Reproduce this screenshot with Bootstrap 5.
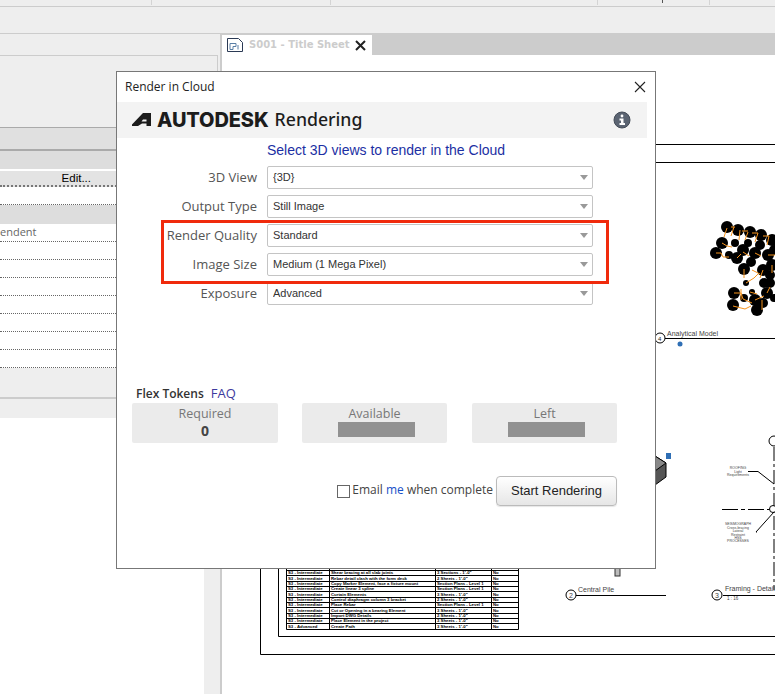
<!DOCTYPE html>
<html lang="en">
<head>
<meta charset="utf-8">
<title>Render in Cloud</title>
<link href="https://cdn.jsdelivr.net/npm/bootstrap@5.3.0/dist/css/bootstrap.min.css" rel="stylesheet">
<style>
html,body{margin:0;height:694px;overflow:hidden;background:#eee;font-family:"Open Sans",sans-serif}
.app-shell{position:relative;width:775px;height:694px;overflow:hidden}
.top-strip{height:7px;border-bottom:1px solid #ccc;background:#eee}
.top-cell{height:5px;border-right:1px solid #d4d4d4}
.tool-band{height:26px;background:#eee}
.work-area{height:661px}
.side-panel{width:222px;border-right:2px solid #ccc;border-top:1px solid #ccc;background:#eee;flex:none}
.side-inner{width:204px;background:#fff;height:100%}
.side-gap{height:94px;background:#eee;border-bottom:1px solid #aaa;padding-top:21px}
.side-box{width:218px;height:72px;border-top:1px solid #ccc;border-right:1px solid #ccc}
.side-head{height:23px;background:#e0e0e0;border-bottom:2px solid #aaa}
.side-sub{height:20px;background:#ddd;border-bottom:2px solid #fff}
.side-edit{height:16px;background:#e3e3e3;border-bottom:2px dotted #777;font:11.500px/14px "Liberation Sans",sans-serif;color:#000}
.side-edit span{width:118px;text-align:right;padding-right:27px;display:block}
.side-row{height:18px;background:#fff;border-bottom:1px dotted #666;font-size:11px;line-height:16px;color:#666}
.side-grey{height:19px;background:#ddd}
.side-band{height:31px;background:#eee;border-bottom:2px solid #ccc}
.side-foot{height:19px;background:#eee}
.view-col{min-width:0;background:#fff;position:relative}
.tab-row{height:22px;background:#ccc;padding-top:2px}
.sheet-tab{width:150px;height:20px;background:#fff;font:bold 10px/20px "DejaVu Sans",sans-serif;color:#ccc}
.tab-doc{margin:0 6px 0 5px}
.tab-shut{margin:0 0 0 5px}
.sheet-art{position:absolute;left:0;top:0;width:775px;height:694px}
.render-dialog{position:absolute;left:116px;top:71px;width:540px;height:498px;background:#fff;border:1px solid #777;display:flex;flex-direction:column}
.dlg-title{height:30px;padding:5px 8px 0;font-size:12px;line-height:20px;color:#222}
.dlg-x{width:14px;height:14px;position:absolute;right:8px;top:8px}
.brand-band{height:36px;width:530px;background:#f3f3f3;padding:0 0 1px 15px;color:#1c1c1c}
.brand-word{font:800 20px/32px Inter,sans-serif;letter-spacing:-.12px;margin-left:6px}
.brand-sub{font:500 17.700px/32px "Noto Sans","Open Sans",sans-serif;margin:0 0 2px 6px}
.pick-title{font:14px/18px "Liberation Sans",sans-serif;color:#1c2fa3;padding:3px 0 0 150px;height:28px}
.form-line{height:23px;margin-bottom:6px}
.form-line label{width:140px;text-align:right;padding:0;margin:0 10px 0 0;font-size:13px;line-height:23px;color:#555}
.render-select{width:326px;height:23px;padding:0 20px 0 5px;font:11px/21px "Liberation Sans",sans-serif;color:#333;border:1px solid #c4c4c4;border-radius:2px;background-size:8px 5px;background-position:right 4px center;background-image:url("data:image/svg+xml,%3Csvg xmlns='http://www.w3.org/2000/svg' viewBox='0 0 8 5'%3E%3Cpath fill='%23999' d='M0 0h8L4 5z'/%3E%3C/svg%3E")}
.red-frame{position:absolute;left:44px;top:148px;width:448px;height:64px;border:3px solid #f02a0c;pointer-events:none}
.form-area{height:219px}
.token-title{font-size:12px;line-height:16px;padding-left:19px;height:18px;color:#333;font-weight:600}
.token-title a{color:#3d3a9e;text-decoration:none;font-weight:400;margin-left:4px;font-size:13px}
.token-row{padding-left:15px}
.token-box{height:40px;background:#ebebeb;border-radius:2px;text-align:center;font-size:12.500px;line-height:16px;color:#777;padding-top:3px;width:145px;margin-right:25px}
.token-box.wide{width:146px;margin-right:24px}
.token-num{font-size:14px;line-height:17px;font-weight:700;color:#444}
.token-mask{display:block;width:77px;height:15px;background:#919191;margin-left:36px}
.send-row{margin-top:33px;padding-right:38px;justify-content:flex-end}
input.mail-check[type=checkbox]{width:13px;height:13px;margin:0 2px 0 0;border:1px solid #666;border-radius:0;flex:none}
.mail-text{font-size:12px;line-height:16px;color:#444;margin:-2px 3px 0 0}
.mail-text span{color:#1650c8}
.start-btn{width:121px;height:30px;padding:0;font:13px/28px "Liberation Sans",sans-serif;color:#222;border:1px solid #bbb;border-radius:4px;background:linear-gradient(#fff,#e6e6e6);box-shadow:0 1px 1px rgba(0,0,0,.1)}
.art-text{font-family:"Liberation Sans",sans-serif}
</style>
</head>
<body>
<div class="app-shell">
  <div class="top-strip d-flex">
    <div class="top-cell" style="width:152px"></div>
    <div class="top-cell" style="width:179px"></div>
    <div class="top-cell" style="width:267px"></div>
    <div class="top-cell" style="width:112px"></div>
  </div>
  <div class="tool-band"></div>
  <div class="work-area d-flex">
    <div class="side-panel">
      <div class="side-inner">
        <div class="side-gap"><div class="side-box"></div></div>
        <div class="side-head"></div>
        <div class="side-sub"></div>
        <div class="side-edit"><span>Edit...</span></div>
        <div class="side-row"></div>
        <div class="side-grey"></div>
        <div class="side-row text-end" style="padding-right:169px">endent</div>
        <div class="side-row"></div>
        <div class="side-row"></div>
        <div class="side-row"></div>
        <div class="side-row"></div>
        <div class="side-row"></div>
        <div class="side-row"></div>
        <div class="side-row"></div>
        <div class="side-band"></div>
        <div class="side-foot"></div>
      </div>
    </div>
    <div class="view-col flex-grow-1">
      <div class="tab-row">
        <div class="sheet-tab d-flex align-items-center">
          <svg class="tab-doc" width="16" height="14" viewBox="0 0 16 14"><path fill="#fff" stroke="#2b3a55" d="M.5.5h11l4 4v9H.5z"/><path fill="none" stroke="#5a7fa5" d="M3 11.500V5.500h6v3H6v3zM11 11.500V7"/></svg>
          S001 - Title Sheet
          <svg class="tab-shut" width="11" height="11" viewBox="0 0 11 11"><path stroke="#222" stroke-width="2" d="M1 1l9 9M10 1l-9 9"/></svg>
        </div>
      </div>
    </div>
  </div>

  <svg class="sheet-art" viewBox="0 0 775 694">
    <path d="M662.500 0V3" stroke="#555"/>
    <g fill="none" stroke="#000">
      <path d="M656 144.500H775M656 162.500H775"/>
      <path d="M260.500 560V654.500H775M278.500 560V636.500H775"/>
      <path d="M665 338.500H775"/>
      <circle cx="660" cy="338" r="5" fill="#fff"/>
      <path d="M576 595.500H666M723 595.500H775"/>
      <circle cx="571" cy="595" r="5" fill="#fff"/>
      <circle cx="717" cy="595" r="5" fill="#fff"/>
      <path d="M774 447V590" stroke-dasharray="14 3 3 3"/>
      <circle cx="774" cy="441" r="5" fill="#fff"/>
      <path d="M722 509.500H770" stroke-dasharray="16 3 4 3"/>
      <circle cx="773" cy="509" r="3.500" fill="#fff"/>
      <path d="M748 471.500H758L774 484M757 532H756L774 512"/>
      <path d="M286.500 566V629.500H518.500V566M329.500 566V629M435.500 566V629M491.500 566V629"/>
      <path d="M286 570.500H518M286 575.500H518M286 581.500H518M286 586.500H518M286 591.500H518M286 597.500H518M286 602.500H518M286 607.500H518M286 613.500H518M286 618.500H518M286 623.500H518"/>
    </g>
    <g fill="#000">
      <circle cx="727" cy="227" r="6"/><circle cx="738" cy="230" r="6"/><circle cx="750" cy="232" r="6"/><circle cx="761" cy="235" r="6"/><circle cx="772" cy="240" r="6"/>
      <circle cx="722" cy="243" r="6"/><circle cx="716" cy="253" r="6"/><circle cx="737" cy="258" r="6"/><circle cx="743" cy="250" r="6"/><circle cx="755" cy="253" r="6"/><circle cx="768" cy="255" r="6"/>
      <circle cx="744" cy="269" r="6"/><circle cx="763" cy="270" r="6"/><circle cx="772" cy="265" r="6"/>
      <circle cx="735" cy="243" r="4"/><circle cx="748" cy="243" r="4"/><circle cx="760" cy="245" r="5"/><circle cx="729" cy="255" r="4"/><circle cx="751" cy="262" r="5"/><circle cx="770" cy="275" r="5"/><circle cx="764" cy="283" r="5"/><circle cx="774" cy="250" r="5"/>
      <circle cx="746" cy="283" r="3"/><circle cx="734" cy="293" r="6"/><circle cx="733" cy="305" r="6"/><circle cx="755" cy="300" r="6"/><circle cx="757" cy="310" r="6"/><circle cx="767" cy="293" r="6"/><circle cx="770" cy="283" r="5"/><circle cx="752" cy="292" r="3"/><circle cx="744" cy="298" r="4"/><circle cx="763" cy="303" r="5"/><circle cx="774" cy="298" r="4"/>
    </g>
    <g fill="none" stroke="#f7941d">
      <path d="M727 228l-3 9M731 227h4M734 227l-3 9M740 230l-1 10M742 231h6M748 232l-3 8M752 233h6l-3 9M763 236h6l-2 9M722 243l5 3 5 1M716 253l5 0 2 4 6 0M737 258l4-4M743 252l6 4M755 253l6 3M768 255h7M744 269v9M763 270l-3 8M772 265v8M752 270l8 4M746 283l8-5 4-4M734 293l7 0 2 6 9 4M741 300l0-11M733 306l12 3 6-3M755 300l9-4M767 293l3-6M750 292l7 2M762 300v10"/>
    </g>
    <g class="art-text" fill="#444">
      <text x="667" y="336" font-size="7">Analytical Model</text>
      <text x="578" y="592" font-size="7">Central Pile</text>
      <text x="725" y="591" font-size="7">Framing - Detail</text>
      <text x="727" y="600" font-size="4.500">1 : 16</text>
      <text x="658" y="341" font-size="6" fill="#222">4</text>
      <text x="569" y="598" font-size="7">2</text>
      <text x="715" y="598" font-size="7">3</text>
      <g font-size="3.500" text-anchor="middle">
        <text x="738" y="469">ROOFING</text><text x="738" y="473">Light</text><text x="738" y="476">Requirements</text>
        <text x="738" y="525">SEISMOGRAPH</text><text x="738" y="529">Cross-bracing</text><text x="738" y="532">Lateral</text><text x="738" y="536">Restraint</text><text x="738" y="539">HSS</text><text x="738" y="542">PROCESSES</text>
      </g>
    </g>
    <g class="art-text" font-size="4.300" font-weight="700" fill="#000">
      <text x="288" y="574">S3 - Intermediate</text><text x="331" y="574">Shear bracing at all slab joints</text><text x="437" y="574">3 Sections - 1'-0"</text><text x="493" y="574">No</text>
      <text x="288" y="580">S3 - Intermediate</text><text x="331" y="580">Rebar detail clash with the form deck</text><text x="437" y="580">2 Sheets - 1'-0"</text><text x="493" y="580">No</text>
      <text x="288" y="585">S3 - Intermediate</text><text x="331" y="585">Copy Marker Element, face a fixture mount</text><text x="437" y="585">Section Plans - Level 1</text><text x="493" y="585">No</text>
      <text x="288" y="590">S3 - Intermediate</text><text x="331" y="590">Create linear 3 spline</text><text x="437" y="590">Section Plans - Level 1</text><text x="493" y="590">No</text>
      <text x="288" y="596">S3 - Intermediate</text><text x="331" y="596">Curtain Elements</text><text x="437" y="596">3 Sheets - 1'-0"</text><text x="493" y="596">No</text>
      <text x="288" y="601">S3 - Intermediate</text><text x="331" y="601">Control diaphragm column 3 bracket</text><text x="437" y="601">2 Sheets - 1'-0"</text><text x="493" y="601">No</text>
      <text x="288" y="606">S3 - Intermediate</text><text x="331" y="606">Place Rebar</text><text x="437" y="606">Section Plans - Level 1</text><text x="493" y="606">No</text>
      <text x="288" y="612">S3 - Intermediate</text><text x="331" y="612">Cut or Opening in a bearing Element</text><text x="437" y="612">3 Sheets - 1'-0"</text><text x="493" y="612">No</text>
      <text x="288" y="617">S3 - Intermediate</text><text x="331" y="617">Import DWG Details</text><text x="437" y="617">2 Sheets - 1'-0"</text><text x="493" y="617">No</text>
      <text x="288" y="622">S3 - Intermediate</text><text x="331" y="622">Place Element in the project</text><text x="437" y="622">3 Sheets - 1'-0"</text><text x="493" y="622">No</text>
      <text x="288" y="628">S3 - Advanced</text><text x="331" y="628">Create Path</text><text x="437" y="628">3 Sheets - 1'-0"</text><text x="493" y="628">No</text>
    </g>
    <path d="M655 456L666 463V477L655 485z" fill="#555" stroke="#000"/>
    <path d="M655 456L666 463L655 471z" fill="#888" stroke="#000"/>
    <rect x="666" y="453" width="5" height="6" fill="#2f6fb5"/>
    <circle cx="680" cy="344" r="2.500" fill="#2f6fb5"/>
    <rect x="615" y="568" width="5" height="8" fill="#bbb" stroke="#333"/>
  </svg>

  <div class="render-dialog">
    <div class="dlg-title">Render in Cloud</div>
    <svg class="dlg-x" viewBox="0 0 14 14"><path stroke="#222" stroke-width="1.100" d="M2 2l10 10M12 2L2 12"/></svg>
    <div class="brand-band d-flex align-items-center">
      <svg width="19" height="13" viewBox="0 0 19 13" fill="#1c1c1c"><path d="M0 13V11.500L10 1 11 0H19V13H14.500V10.500H10L6 13zM11 6.500L9.500 8.500H14.500V6.500z"/></svg>
      <span class="brand-word">AUTODESK</span><span class="brand-sub">Rendering</span>
      <svg class="ms-auto" style="margin-right:16px" width="18" height="18" viewBox="0 0 18 18"><circle cx="9" cy="9" r="8" fill="#5b6472" stroke="#444c58"/><circle cx="9" cy="5" r="1.400" fill="#fff"/><path fill="#fff" d="M6.500 7.500H10.500V12H12V14H6.500V12H8V9.500H6.500z"/></svg>
    </div>
    <div class="pick-title">Select 3D views to render in the Cloud</div>
    <form class="form-area">
      <div class="form-line d-flex"><label for="s1">3D View</label><select id="s1" class="form-select render-select"><option>{3D}</option></select></div>
      <div class="form-line d-flex"><label for="s2">Output Type</label><select id="s2" class="form-select render-select"><option>Still Image</option></select></div>
      <div class="form-line d-flex"><label for="s3">Render Quality</label><select id="s3" class="form-select render-select"><option>Standard</option></select></div>
      <div class="form-line d-flex"><label for="s4">Image Size</label><select id="s4" class="form-select render-select"><option>Medium (1 Mega Pixel)</option></select></div>
      <div class="form-line d-flex"><label for="s5">Exposure</label><select id="s5" class="form-select render-select"><option>Advanced</option></select></div>
    </form>
    <div class="red-frame"></div>
    <div class="token-title">Flex Tokens <a href="#">FAQ</a></div>
    <div class="token-row d-flex">
      <div class="token-box wide">Required<div class="token-num">0</div></div>
      <div class="token-box">Available<span class="token-mask"></span></div>
      <div class="token-box">Left<span class="token-mask"></span></div>
    </div>
    <div class="send-row d-flex">
      <input class="form-check-input mail-check align-self-center" type="checkbox" id="m1" aria-label="Email me when complete">
      <label class="mail-text align-self-center" for="m1">Email <span>me</span> when complete</label>
      <button type="button" class="btn start-btn">Start Rendering</button>
    </div>
  </div>
</div>
<script src="https://cdn.jsdelivr.net/npm/bootstrap@5.3.0/dist/js/bootstrap.bundle.min.js"></script>
</body>
</html>
